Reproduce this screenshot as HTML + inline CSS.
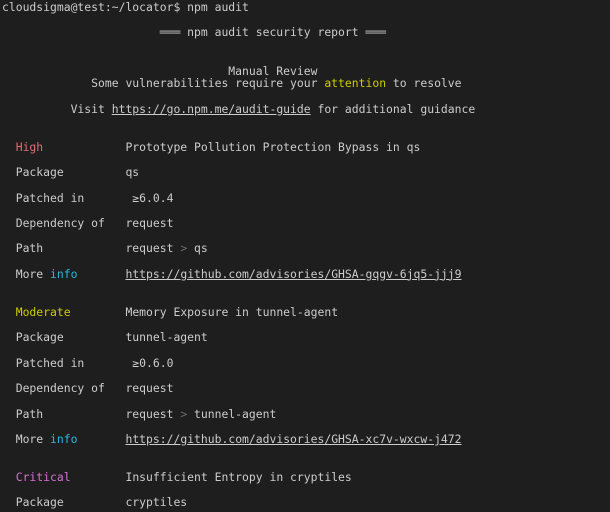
<!DOCTYPE html>
<html><head><meta charset="utf-8"><style>
html,body{margin:0;padding:0;background:#1e1e1e;width:610px;height:512px;overflow:hidden}
pre{margin:0;padding:1px 0 0 2px;font-family:"DejaVu Sans Mono","Liberation Mono",monospace;font-size:11.4px;line-height:12.7px;color:#cccccc}
.r{color:#e06c75}.y{color:#cdcd00}.m{color:#d670d6}.c{color:#29b8db}.g{color:#6b6b6b}.u{text-decoration:underline}
</style></head><body><pre>cloudsigma@test:~/locator$ npm audit

                       ═══ npm audit security report ═══


                                 Manual Review
             Some vulnerabilities require your <span class="y">attention</span> to resolve

          Visit <span class="u">https://go.npm.me/audit-guide</span> for additional guidance


  <span class="r">High</span>            Prototype Pollution Protection Bypass in qs

  Package         qs

  Patched in       ≥6.0.4

  Dependency of   request

  Path            request <span class="g">&gt;</span> qs

  More <span class="c">info</span>       <span class="u">https://github.com/advisories/GHSA-gqgv-6jq5-jjj9</span>


  <span class="y">Moderate</span>        Memory Exposure in tunnel-agent

  Package         tunnel-agent

  Patched in       ≥0.6.0

  Dependency of   request

  Path            request <span class="g">&gt;</span> tunnel-agent

  More <span class="c">info</span>       <span class="u">https://github.com/advisories/GHSA-xc7v-wxcw-j472</span>


  <span class="m">Critical</span>        Insufficient Entropy in cryptiles

  Package         cryptiles
</pre></body></html>
